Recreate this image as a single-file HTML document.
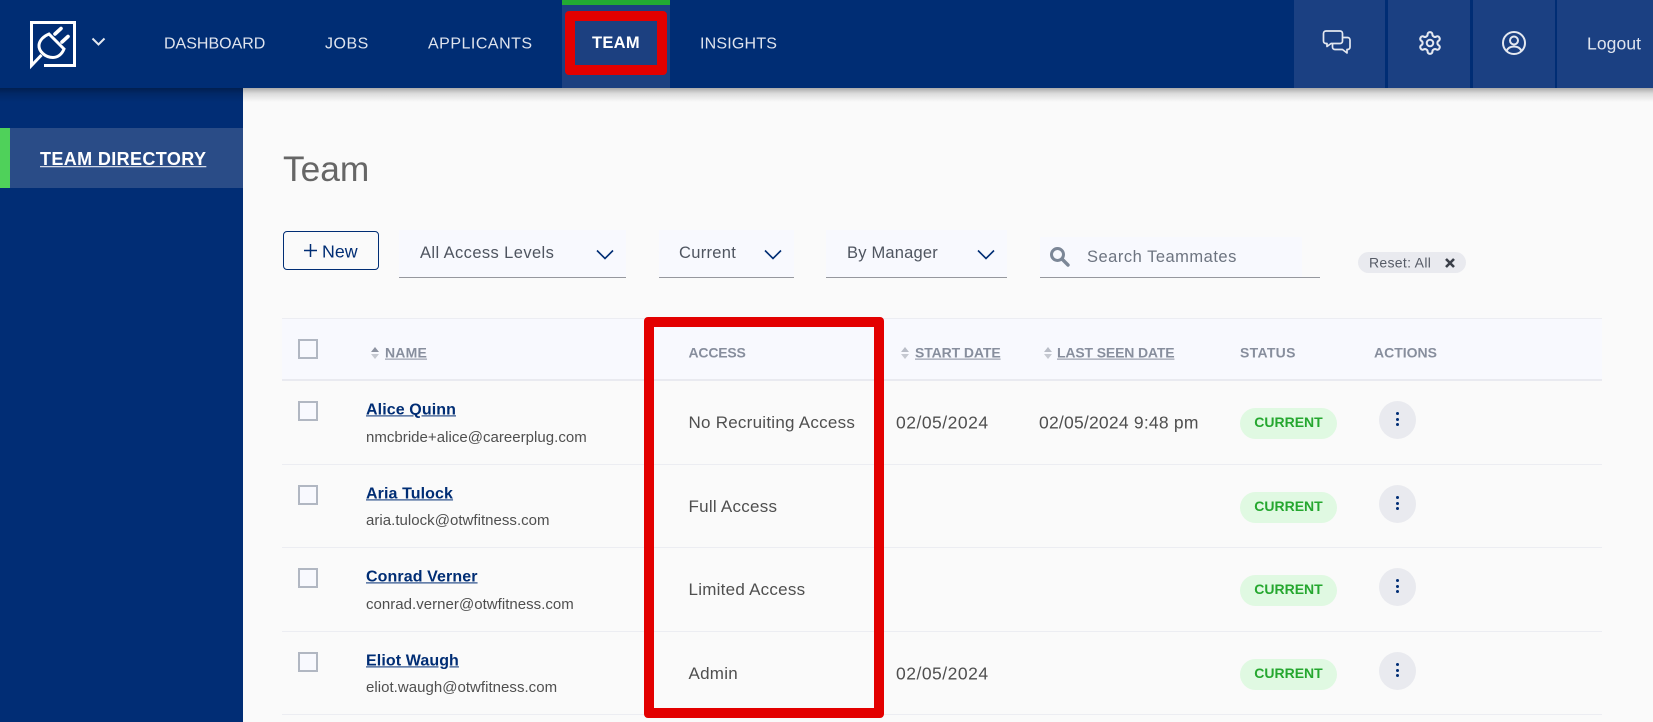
<!DOCTYPE html>
<html><head><meta charset="utf-8">
<style>
html,body{margin:0;padding:0;width:1653px;height:722px;overflow:hidden;background:#fafafa}
body{position:relative;font-family:"Liberation Sans",sans-serif;color:#4a4a4a}
.a{position:absolute}
.t{position:absolute;white-space:nowrap;transform:translateY(-50%);line-height:1.2}
.nav{font-size:16px;color:#dfe4ee;top:44px}
.th{font-size:14px;font-weight:bold;color:#878e9d;top:353px}
.u{text-decoration:underline}
.nm{font-size:16px;font-weight:bold;color:#002d74;text-decoration:underline;left:366px;letter-spacing:.1px;margin-top:.5px}
.em{font-size:15px;color:#4f4f4f;left:366px;letter-spacing:.03px;margin-top:1px}
.ac{font-size:17px;color:#4f4f4f;left:688.500px;letter-spacing:.25px;margin-top:.5px}
.dt{font-size:17.500px;color:#4f4f4f;letter-spacing:.5px;margin-top:.5px}
.cb{position:absolute;left:298px;width:16px;height:16px;border:2px solid #b1b7c2;background:#f8f9fe}
.pill{position:absolute;left:1240px;width:97px;height:31px;border-radius:16px;background:#e0f9e2;color:#25a72f;font-weight:bold;font-size:14px;line-height:29px;text-align:center}
.dots{position:absolute;left:1379px;width:37px;height:38px;border-radius:50%;background:#e9eaef}
.dots i{position:absolute;left:17px;width:3px;height:3px;border-radius:50%;background:#002d74}
.hl{position:absolute;left:282px;width:1320px;height:1px;background:#ecedf2}
.sel{position:absolute;top:230px;height:47px;background:#f8f9fe;border-bottom:1px solid #96989e}
.flt{font-size:16.500px;color:#4f5560;top:254px}
.sort{position:absolute;top:347px;width:8px;height:12px}
</style></head>
<body>
<!-- main table background -->
<div class="a" style="left:282px;top:318px;width:1320px;height:61px;background:#f8f9fe"></div>
<div class="hl" style="top:318px"></div>
<div class="hl" style="top:379px;height:2px;background:#e9eaf0"></div>
<div class="hl" style="top:464px"></div>
<div class="hl" style="top:547px"></div>
<div class="hl" style="top:631px"></div>
<div class="hl" style="top:714px"></div>

<!-- heading -->
<div class="t" style="left:283px;top:170px;font-size:35.300px;color:#666;font-weight:normal">Team</div>

<!-- filters -->
<div class="a" style="left:283px;top:231px;width:94px;height:37px;border:1px solid #002d74;border-radius:4px"></div>
<svg class="a" style="left:303px;top:243px" width="15" height="15"><path d="M7.500 1v13M1 7.500h13" stroke="#002d74" stroke-width="1.500" fill="none"/></svg>
<div class="t" style="left:322px;top:251.500px;font-size:17.800px;color:#002d74;font-weight:normal">New</div>

<div class="sel" style="left:399px;width:227px"></div>
<div class="t flt" style="left:420px;letter-spacing:.4px">All Access Levels</div>
<svg class="a" style="left:596px;top:249px" width="18" height="11"><path d="M1 1.500l8 8 8-8" stroke="#002d74" stroke-width="1.600" fill="none"/></svg>

<div class="sel" style="left:659px;width:135px"></div>
<div class="t flt" style="left:679px;letter-spacing:.3px">Current</div>
<svg class="a" style="left:764px;top:249px" width="18" height="11"><path d="M1 1.500l8 8 8-8" stroke="#002d74" stroke-width="1.600" fill="none"/></svg>

<div class="sel" style="left:826px;width:181px"></div>
<div class="t flt" style="left:847px;letter-spacing:.2px">By Manager</div>
<svg class="a" style="left:977px;top:249px" width="18" height="11"><path d="M1 1.500l8 8 8-8" stroke="#002d74" stroke-width="1.600" fill="none"/></svg>

<div class="a" style="left:1040px;top:237px;width:262px;height:40px;background:#f8f9fe"></div>
<div class="a" style="left:1040px;top:277px;width:280px;height:1px;background:#96989e"></div>
<svg class="a" style="left:1049px;top:246px" width="21" height="21"><circle cx="8.500" cy="8.500" r="6" stroke="#7c8797" stroke-width="3" fill="none"/><path d="M13 13l6 6" stroke="#7c8797" stroke-width="3.400" stroke-linecap="round"/></svg>
<div class="t" style="left:1087px;top:258px;font-size:16.500px;color:#6d7480;letter-spacing:.5px">Search Teammates</div>

<div class="a" style="left:1358px;top:252px;width:108px;height:21px;border-radius:11px;background:#e9eaef"></div>
<div class="t" style="left:1369px;top:263px;font-size:14px;color:#565b66;letter-spacing:.3px">Reset: All</div>
<svg class="a" style="left:1444px;top:257px" width="12" height="12"><path d="M2 2l8 8M10 2l-8 8" stroke="#3a3f48" stroke-width="2.600"/></svg>

<!-- table head -->
<div class="cb" style="top:339px"></div>
<svg class="sort" style="left:371px" viewBox="0 0 8 12"><path d="M4 0L8 5H0z" fill="#8d93a1"/><path d="M4 12L8 7H0z" fill="#c6c9d1"/></svg>
<div class="t th u" style="left:385px;letter-spacing:.2px">NAME</div>
<div class="t th" style="left:688.500px;letter-spacing:-.2px">ACCESS</div>
<svg class="sort" style="left:901px" viewBox="0 0 8 12"><path d="M4 0L8 5H0z" fill="#b9bdc7"/><path d="M4 12L8 7H0z" fill="#c6c9d1"/></svg>
<div class="t th u" style="left:915px;letter-spacing:-.1px">START DATE</div>
<svg class="sort" style="left:1044px" viewBox="0 0 8 12"><path d="M4 0L8 5H0z" fill="#b9bdc7"/><path d="M4 12L8 7H0z" fill="#c6c9d1"/></svg>
<div class="t th u" style="left:1057px;letter-spacing:-.15px">LAST SEEN DATE</div>
<div class="t th" style="left:1240px;letter-spacing:.3px">STATUS</div>
<div class="t th" style="left:1374px">ACTIONS</div>

<!-- rows -->
<div class="cb" style="top:401px"></div>
<div class="t nm" style="top:409px">Alice Quinn</div>
<div class="t em" style="top:437px">nmcbride+alice@careerplug.com</div>
<div class="t ac" style="top:422px">No Recruiting Access</div>
<div class="t dt" style="left:896px;top:422px">02/05/2024</div>
<div class="t dt" style="left:1039px;top:422px;letter-spacing:.22px">02/05/2024 9:48 pm</div>
<div class="pill" style="top:408px">CURRENT</div>
<div class="dots" style="top:401px"><i style="top:11px"></i><i style="top:17px"></i><i style="top:22px"></i></div>

<div class="cb" style="top:485px"></div>
<div class="t nm" style="top:493px">Aria Tulock</div>
<div class="t em" style="top:520px">aria.tulock@otwfitness.com</div>
<div class="t ac" style="top:506px">Full Access</div>
<div class="pill" style="top:492px">CURRENT</div>
<div class="dots" style="top:485px"><i style="top:11px"></i><i style="top:17px"></i><i style="top:22px"></i></div>

<div class="cb" style="top:568px"></div>
<div class="t nm" style="top:576px">Conrad Verner</div>
<div class="t em" style="top:604px">conrad.verner@otwfitness.com</div>
<div class="t ac" style="top:589px">Limited Access</div>
<div class="pill" style="top:575px">CURRENT</div>
<div class="dots" style="top:568px"><i style="top:11px"></i><i style="top:17px"></i><i style="top:22px"></i></div>

<div class="cb" style="top:652px"></div>
<div class="t nm" style="top:660px">Eliot Waugh</div>
<div class="t em" style="top:687px">eliot.waugh@otwfitness.com</div>
<div class="t ac" style="top:673px">Admin</div>
<div class="t dt" style="left:896px;top:673px">02/05/2024</div>
<div class="pill" style="top:659px">CURRENT</div>
<div class="dots" style="top:652px"><i style="top:11px"></i><i style="top:17px"></i><i style="top:22px"></i></div>

<!-- sidebar -->
<div class="a" style="left:0;top:88px;width:243px;height:634px;background:#012d75"></div>
<div class="a" style="left:0;top:128px;width:243px;height:60px;background:#2a4c87"></div>
<div class="a" style="left:0;top:128px;width:10px;height:60px;background:#4fd15a"></div>
<div class="t" style="left:40px;top:160px;font-size:18px;font-weight:bold;color:#fff;text-decoration:underline;letter-spacing:.38px">TEAM DIRECTORY</div>

<!-- header shadow -->
<div class="a" style="left:0;top:88px;width:1653px;height:14px;background:linear-gradient(to bottom,rgba(0,0,0,.32),rgba(0,0,0,.12) 40%,rgba(0,0,0,0))"></div>

<!-- header -->
<div class="a" style="left:0;top:0;width:1653px;height:88px;background:#002d74"></div>
<div class="a" style="left:562px;top:0;width:108px;height:88px;background:#1c4080"></div>
<div class="a" style="left:562px;top:0;width:108px;height:5px;background:#22ab33"></div>
<div class="a" style="left:1294px;top:0;width:91px;height:88px;background:#1b4082"></div>
<div class="a" style="left:1388px;top:0;width:82px;height:88px;background:#1b4082"></div>
<div class="a" style="left:1473px;top:0;width:82px;height:88px;background:#1b4082"></div>
<div class="a" style="left:1557px;top:0;width:96px;height:88px;background:#1b4082"></div>

<svg class="a" style="left:28px;top:19px" width="52" height="52" viewBox="0 0 52 52" fill="none" stroke="#fff">
<path d="M16 46.500H46.500V3.500H3.500V46.500L13.500 36" stroke-width="3"/>
<path d="M21 15L36 30C34 35 30 38.500 25 38.500C17 38.500 10.500 32 11 26C11.500 21 16 17 21 15Z" stroke-width="3"/>
<path d="M27 15L33 9.500M34 23L40 17.500" stroke-width="3.600" stroke-linecap="round"/>
</svg>
<svg class="a" style="left:91px;top:37px" width="15" height="10"><path d="M1.500 1.500L7.500 7.500L13.500 1.500" stroke="#e4e8f0" stroke-width="2" fill="none"/></svg>

<div class="t nav" style="left:164px">DASHBOARD</div>
<div class="t nav" style="left:325px;letter-spacing:.5px">JOBS</div>
<div class="t nav" style="left:428px;letter-spacing:.5px">APPLICANTS</div>
<div class="t nav" style="left:592px;font-weight:bold;color:#fff;font-size:16.500px;letter-spacing:.3px">TEAM</div>
<div class="t nav" style="left:700px;letter-spacing:.2px">INSIGHTS</div>
<div class="t nav" style="left:1587px;font-size:17.500px;letter-spacing:.1px">Logout</div>

<!-- red boxes -->
<div class="a" style="left:565px;top:11px;width:82px;height:44px;border:10px solid #e30000;border-radius:4px"></div>
<div class="a" style="left:644px;top:317px;width:220px;height:381px;border:10px solid #e30000;border-radius:4px"></div>

<!-- right icons -->
<svg class="a" style="left:1322px;top:29px" width="30" height="26" viewBox="0 0 30 26" fill="none" stroke="#e4e8f0" stroke-width="1.700" stroke-linejoin="round">
<path d="M4 2H18C19.500 2 20.500 3 20.500 4.500V12C20.500 13.500 19.500 14.500 18 14.500H9L5 17.500V14.500H4C2.500 14.500 1.500 13.500 1.500 12V4.500C1.500 3 2.500 2 4 2Z"/>
<path d="M20.500 8.500H25.500C27 8.500 28 9.500 28 11V18C28 19.500 27 20.500 25.500 20.500H25V24L20.500 20.500H13C11.500 20.500 10.500 19.500 10.500 18V14.800"/>
</svg>
<svg class="a" style="left:1417px;top:30px" width="26" height="26" viewBox="0 0 24 24" fill="none" stroke="#e4e8f0" stroke-width="1.900">
<path d="M12.220 2h-.44a2 2 0 0 0-2 2v.18a2 2 0 0 1-1 1.730l-.43.25a2 2 0 0 1-2 0l-.15-.08a2 2 0 0 0-2.730.73l-.22.38a2 2 0 0 0 .73 2.730l.15.1a2 2 0 0 1 1 1.720v.51a2 2 0 0 1-1 1.740l-.15.09a2 2 0 0 0-.73 2.730l.22.38a2 2 0 0 0 2.730.73l.15-.08a2 2 0 0 1 2 0l.43.25a2 2 0 0 1 1 1.730V20a2 2 0 0 0 2 2h.44a2 2 0 0 0 2-2v-.18a2 2 0 0 1 1-1.730l.43-.25a2 2 0 0 1 2 0l.15.08a2 2 0 0 0 2.730-.73l.22-.39a2 2 0 0 0-.73-2.730l-.15-.08a2 2 0 0 1-1-1.740v-.5a2 2 0 0 1 1-1.740l.15-.09a2 2 0 0 0 .73-2.730l-.22-.38a2 2 0 0 0-2.730-.73l-.15.08a2 2 0 0 1-2 0l-.43-.25a2 2 0 0 1-1-1.730V4a2 2 0 0 0-2-2z"/>
<circle cx="12" cy="12" r="3"/>
</svg>
<svg class="a" style="left:1501px;top:30px" width="26" height="26" viewBox="0 0 26 26" fill="none" stroke="#e4e8f0" stroke-width="2">
<circle cx="13" cy="13" r="11"/>
<circle cx="13" cy="10.500" r="4"/>
<path d="M5.500 21C7 17.500 9.500 16.500 13 16.500C16.500 16.500 19 17.500 20.500 21"/>
</svg>
</body></html>
